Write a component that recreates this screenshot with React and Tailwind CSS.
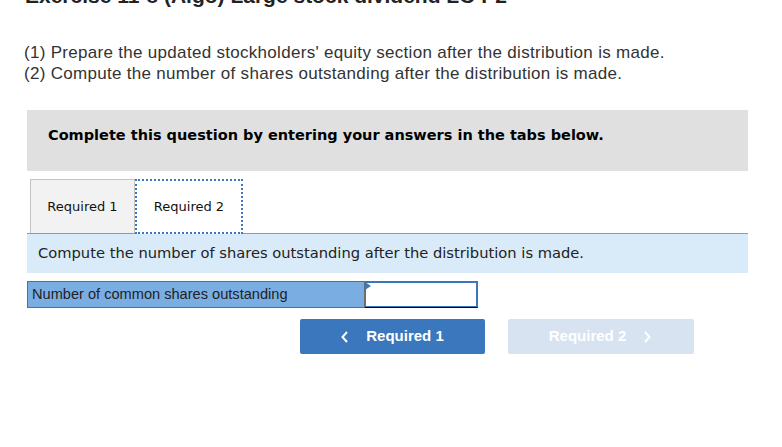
export default function App() {
  return (
    <div className="w-[782px] h-[447px] overflow-hidden bg-white relative">
      {/* heading, scrolled mostly out of view */}
      <h1 className="absolute left-[25px] top-[-16px] text-[21px] leading-[24px] font-bold text-[#222] font-['Liberation_Sans',sans-serif] whitespace-nowrap">
        Exercise 11-8 (Algo) Large stock dividend LO P2
      </h1>

      <div className="pt-[42px] pl-[24px] text-[17px] leading-[21px] tracking-[0.3px] text-[#333] font-['Liberation_Sans',sans-serif]">
        <p>(1) Prepare the updated stockholders' equity section after the distribution is made.</p>
        <p>(2) Compute the number of shares outstanding after the distribution is made.</p>
      </div>

      <div className="ml-[27px] w-[721px] mt-[26px]">
        <div className="bg-[#e0e0e0] h-[61px] pl-[21px] pt-[15px] font-['DejaVu_Sans',sans-serif] font-bold text-[14.5px] text-black">
          Complete this question by entering your answers in the tabs below.
        </div>

        {/* tabs */}
        <div className="flex items-end mt-[7px] pl-[3px] h-[55px] font-['DejaVu_Sans',sans-serif] text-[13px] text-[#111]">
          <div className="w-[105px] h-[54px] bg-[#f2f2f2] border border-[#c4c4c4] border-b-0 flex items-center justify-center">
            Required 1
          </div>
          <div className="w-[108px] h-[55px] bg-white border-2 border-dotted border-[#3b78c0] flex items-center justify-center -mb-[1px] relative z-10">
            Required 2
          </div>
        </div>

        <div className="border-t border-[#999] bg-[#d9ebf9] h-[40px] pl-[11px] flex items-center font-['DejaVu_Sans',sans-serif] text-[14.7px] text-[#222]">
          Compute the number of shares outstanding after the distribution is made.
        </div>

        {/* input row */}
        <div className="flex mt-[8px] h-[27px] font-['Liberation_Sans',sans-serif] text-[14.6px] text-[#222]">
          <div className="w-[338px] bg-[#7aaee3] border border-[#6b6b6b] pl-[4px] flex items-center">
            Number of common shares outstanding
          </div>
          <div className="w-[113px] border-t border-r border-[#6b6b6b] border-b border-b-black relative">
            <div className="h-full border border-[#3b78c0] bg-white"></div>
            <div className="absolute left-0 top-0 w-0 h-0 border-t-[4px] border-b-[4px] border-l-[6px] border-t-transparent border-b-transparent border-l-[#3b78c0]"></div>
          </div>
        </div>

        {/* nav buttons */}
        <div className="flex mt-[11px] pl-[273px] gap-[23px] font-['Liberation_Sans',sans-serif] font-bold text-[15px] text-white">
          <button className="w-[185px] h-[35px] bg-[#3a77bc] rounded-[2px] flex items-center justify-center gap-[17px]">
            <svg width="8" height="12" viewBox="0 0 8 12" fill="none" stroke="white" strokeWidth="2">
              <path d="M6 1 L1.5 6 L6 11" />
            </svg>
            <span>Required 1</span>
          </button>
          <button className="w-[186px] h-[35px] bg-[#d7e3f1] rounded-[2px] flex items-center justify-center gap-[17px] pr-[2px]">
            <span>Required 2</span>
            <svg width="8" height="12" viewBox="0 0 8 12" fill="none" stroke="white" strokeWidth="2">
              <path d="M2 1 L6.5 6 L2 11" />
            </svg>
          </button>
        </div>
      </div>
    </div>
  );
}
